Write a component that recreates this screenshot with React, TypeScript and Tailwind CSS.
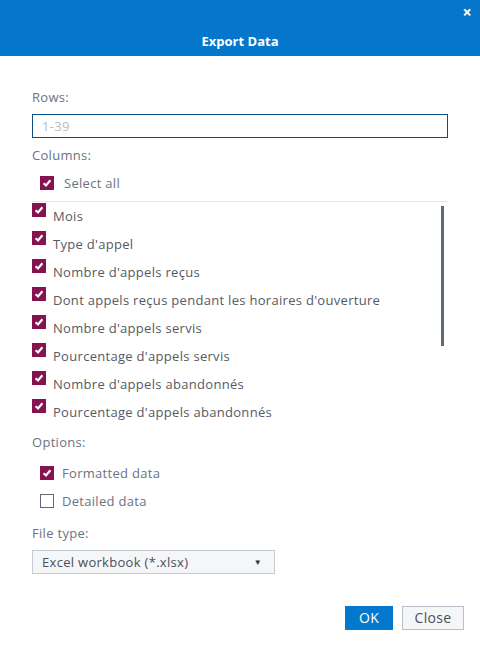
const columns = [
  'Mois',
  "Type d'appel",
  "Nombre d'appels reçus",
  "Dont appels reçus pendant les horaires d'ouverture",
  "Nombre d'appels servis",
  "Pourcentage d'appels servis",
  "Nombre d'appels abandonnés",
  "Pourcentage d'appels abandonnés",
]

const Check = ({ checked = true }: { checked?: boolean }) =>
  checked ? (
    <span className="flex h-[14px] w-[14px] shrink-0 items-center justify-center bg-[#85134f]">
      <svg width="10" height="10" viewBox="0 0 10 10">
        <path d="M1.6 5.2 L4 7.5 L8.4 2.2" fill="none" stroke="white" strokeWidth="2.2" />
      </svg>
    </span>
  ) : (
    <span className="h-[14px] w-[14px] shrink-0 border border-[#5f6b7a] bg-white" />
  )

const App = () => {
  return (
    <div className="h-[646px] w-[480px] bg-white font-['Open_Sans',sans-serif] text-[13px] leading-[16px] tracking-[0.3px]">
      <header className="relative flex h-[56px] items-start justify-center bg-[#0477cc] pt-[33px]">
        <h1 className="text-[13px] font-bold leading-[16px] tracking-normal text-white">Export Data</h1>
        <span className="absolute right-[8px] top-[4px] text-[16px] font-bold leading-[16px] text-white">×</span>
      </header>

      <div className="px-[32px] pt-[33px]">
        <div className="text-[#6b7380]">Rows:</div>
        <input
          placeholder="1-39"
          className="mt-[9px] block h-[24px] w-[416px] border border-[#0b4f88] px-[9px] text-[13px] leading-[16px] outline-none placeholder:text-[#b8bcc4]"
        />
        <div className="mt-[9px] text-[#6b7380]">Columns:</div>
        <label className="ml-[8px] mt-[12px] flex items-center gap-[10px] text-[#6b7380]">
          <Check />
          Select all
        </label>
        <div className="mt-[10px] flex border-t border-[#e8e9eb] pr-[4px]">
          <ul className="flex-1">
            {columns.map((c) => (
              <li key={c} className="flex h-[28px] gap-[7px] pt-[1px] text-[#555a63]">
                <Check />
                <span className="mt-[5px]">{c}</span>
              </li>
            ))}
          </ul>
          <div className="mt-[4px] h-[140px] w-[3px] bg-[#5f6b7b]" />
        </div>

        <div className="mt-[8px] text-[#6b7380]">Options:</div>
        <label className="ml-[8px] mt-[15px] flex items-center gap-[8px] text-[#6b7380]">
          <Check />
          Formatted data
        </label>
        <label className="ml-[8px] mt-[12px] flex items-center gap-[8px] text-[#6b7380]">
          <Check checked={false} />
          Detailed data
        </label>
        <div className="mt-[16px] text-[#6b7380]">File type:</div>
        <div className="mt-[9px] flex h-[24px] w-[243px] items-center justify-between border border-[#c6cbd2] bg-[#f5f6f8] pl-[9px] pr-[12px] text-[#4a4f58]">
          <span>Excel workbook (*.xlsx)</span>
          <span className="text-[8px] text-[#333]">▼</span>
        </div>
      </div>

      <div className="mt-[32px] flex justify-end gap-[9px] pr-[16px]">
        <button className="h-[24px] w-[48px] bg-[#0478cc] text-[14px] text-white">OK</button>
        <button className="h-[24px] w-[62px] border border-[#b8bfc8] bg-[#f4f6f8] text-[14px] text-[#4a4f58]">
          Close
        </button>
      </div>
    </div>
  )
}

export default App
